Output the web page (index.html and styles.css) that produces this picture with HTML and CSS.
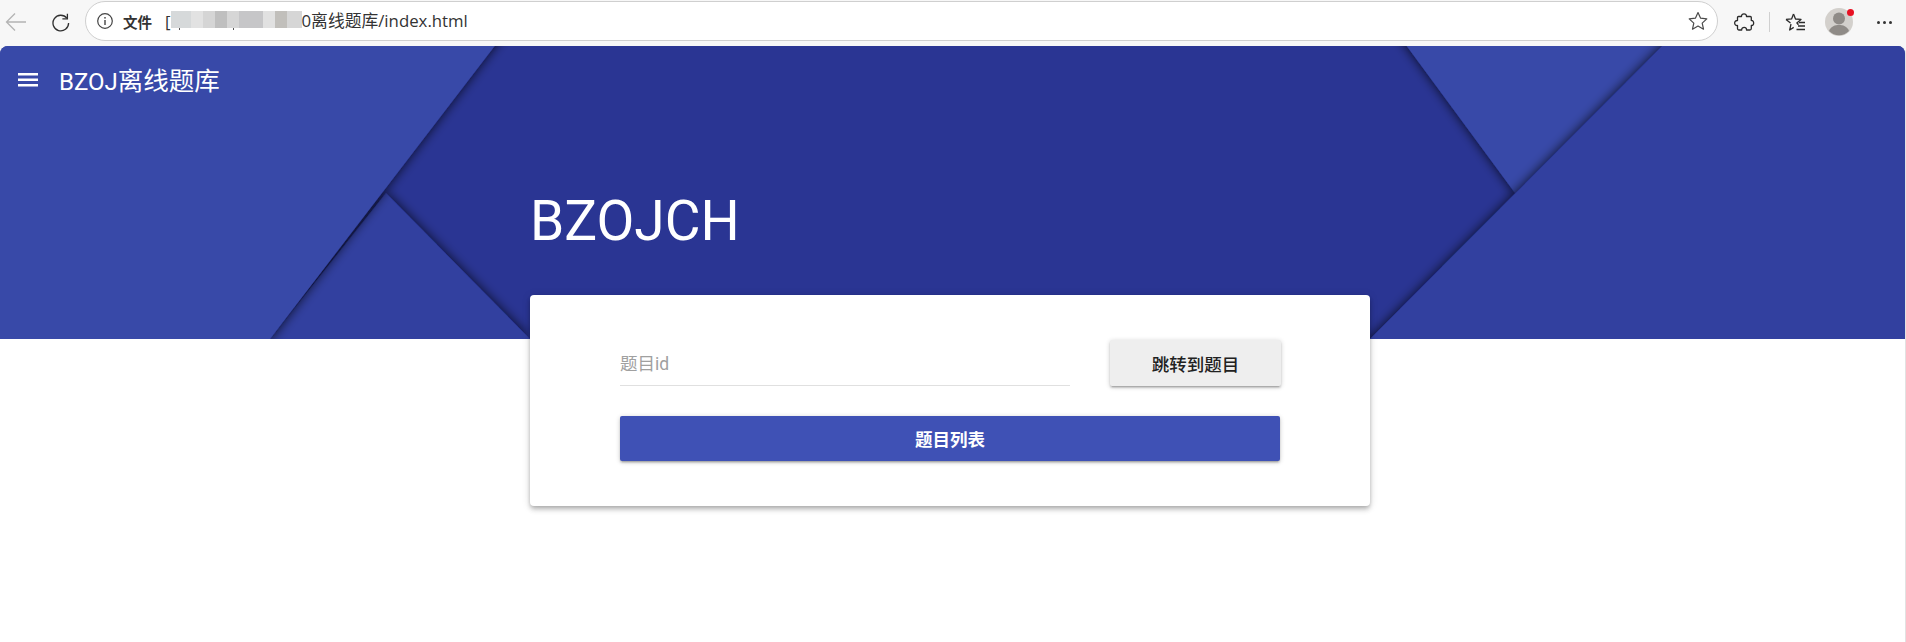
FILE: index.html
```html
<!DOCTYPE html>
<html lang="zh-CN">
<head>
<meta charset="utf-8">
<title>BZOJ离线题库</title>
<link rel="stylesheet" href="styles.css">
</head>
<body>
<div class="browser-bar">
  <button class="nav-btn back" aria-label="back">
    <svg width="24" height="24" viewBox="0 0 24 24"><path d="M22 12H2.500M11 3.500 2.500 12l8.500 8.500" fill="none" stroke="#b4b4b4" stroke-width="1.300"/></svg>
  </button>
  <button class="nav-btn reload" aria-label="reload">
    <svg width="20" height="20" viewBox="0 0 20 20"><path d="M15.900 6.200A7.800 7.800 0 1 0 17.600 11" fill="none" stroke="#303030" stroke-width="1.300"/><path d="M16.400 1.800v5h-5" fill="none" stroke="#303030" stroke-width="1.300"/></svg>
  </button>
  <div class="address">
    <svg class="info" width="18" height="18" viewBox="0 0 18 18"><circle cx="9" cy="9" r="7.300" fill="none" stroke="#444" stroke-width="1.200"/><rect x="8.300" y="8" width="1.400" height="5" fill="#444"/><rect x="8.300" y="5" width="1.400" height="1.600" fill="#444"/></svg>
    <span class="scheme">文件</span>
    <span class="url-start">[</span>
    <span class="mosaic"></span>
    <span class="url">0离线题库/index.html</span>
    <svg class="star" width="22" height="22" viewBox="0 0 22 22"><path d="M11 2.500l2.600 5.700 6.200.7-4.600 4.200 1.300 6.100L11 16.100l-5.500 3.100 1.300-6.100-4.600-4.200 6.200-.7z" fill="none" stroke="#4a4a4a" stroke-width="1.200" stroke-linejoin="round"/></svg>
  </div>
  <div class="tools">
    <svg class="ext" width="22" height="22" viewBox="0 0 22 22"><path d="M8.500 5.500c-.4-3.600 5.400-3.600 5 0h3.800a1 1 0 0 1 1 1v3c3-.6 3.300 5.400 0 5v3a1.500 1.500 0 0 1-1.500 1.500h-3.300c.4-3.400-5-3.400-4.800 0H6a1.500 1.500 0 0 1-1.500-1.500v-3c-3.800.5-3.800-5.400 0-5v-3a1 1 0 0 1 1-1z" fill="none" stroke="#2b2b2b" stroke-width="1.300" stroke-linejoin="round"/></svg>
    <span class="divider"></span>
    <svg class="favs" width="24" height="22" viewBox="0 0 24 22"><path d="M9.500 3l2 5 5.500.4-4.200 3.500 1.300 1.100-.3 1M7 13l-1.300 6 4-2.600M2 8.400l4.500 3.600" fill="none" stroke="#2b2b2b" stroke-width="1.300" stroke-linejoin="round"/><path d="M9.500 3 7.600 8 2 8.400M15 11.500h6M14 15h7M12.500 18.500h8.500" fill="none" stroke="#2b2b2b" stroke-width="1.300"/></svg>
    <div class="avatar">
      <svg width="28" height="28" viewBox="0 0 28 28"><circle cx="14" cy="14" r="14" fill="#d3d0cc"/><circle cx="14" cy="10.500" r="6" fill="#8f8b87"/><path d="M4 23c2-5 6-6 10-6s8 1 10 6a14 14 0 0 1-20 0z" fill="#8f8b87"/></svg>
      <span class="dot"></span>
    </div>
    <span class="more"><i></i><i></i><i></i></span>
  </div>
</div>

<div class="app">
  <header class="hero">
    <svg class="hero-art" viewBox="0 0 1905 293" preserveAspectRatio="none" aria-hidden="true">
      <defs>
        <filter id="s" filterUnits="userSpaceOnUse" x="-50" y="-50" width="2000" height="400">
          <feGaussianBlur in="SourceAlpha" stdDeviation="6"/>
          <feComponentTransfer><feFuncA type="linear" slope=".8"/></feComponentTransfer>
          <feMerge><feMergeNode/><feMergeNode in="SourceGraphic"/></feMerge>
        </filter>
      </defs>
      <polygon points="1392,-20 1682,-20 1515,147" fill="#3849a8" filter="url(#s)"/>
      <polygon points="386,147 270,293 530,293" fill="#303f9f" filter="url(#s)"/>
      <polygon points="-20,-20 510,-20 270,293 -20,293" fill="#3849a8" filter="url(#s)"/>
      <polygon points="1682,-20 1926,-20 1926,313 1350,313" fill="#303f9f" filter="url(#s)"/>
    </svg>
    <div class="toolbar">
      <svg class="menu" width="20" height="14" viewBox="0 0 20 14"><path d="M0 0h20v2.500H0zM0 5.500h20V8H0zM0 11h20v2.500H0z" fill="#fff"/></svg>
      <span class="app-title">BZOJ<span class="app-title-cjk">离线题库</span></span>
    </div>
    <h1 class="hero-title">BZOJCH</h1>
  </header>
  <main class="card">
    <div class="row">
      <label class="field"><input type="text" placeholder="题目id"></label>
      <button class="btn btn-light">跳转到题目</button>
    </div>
    <button class="btn btn-primary">题目列表</button>
  </main>
</div>
</body>
</html>
```

FILE: styles.css
```css
* { box-sizing: border-box; }
html, body { margin: 0; height: 100%; background: #f7f7f7; overflow: hidden; }
body { font-family: Roboto, "Noto Sans CJK SC", sans-serif; display: flex; flex-direction: column; }
button { font-family: inherit; border: 0; padding: 0; background: none; }

.browser-bar { height: 46px; flex: none; display: flex; align-items: center; background: #f7f7f7; padding-left: 4px; }
.nav-btn { width: 24px; height: 24px; margin-top: -3px; display: flex; align-items: center; justify-content: center; }
.reload { margin-left: 21px; }
.address { margin-left: 12px; width: 1633px; height: 40px; margin-top: -4px; border: 1px solid #cfcfcf; border-radius: 20px; background: #fff; display: flex; align-items: center; padding-left: 10px; font-family: "Open Sans", "Noto Sans CJK SC", sans-serif; color: #333; font-size: 16.800px; }
.info { flex: none; }
.scheme { margin-left: 9px; font-size: 14.500px; font-weight: 700; font-family: "Noto Sans CJK SC", sans-serif; color: #333; }
.url-start { margin-left: 13px; }
.mosaic { width: 131px; height: 20px; background:
  linear-gradient(#555, #555) 8px 17px / 1px 2px no-repeat,
  linear-gradient(#555, #555) 62px 17px / 1px 2px no-repeat,
  linear-gradient(90deg, #d6d9da 0 20px, #e2e2e2 20px 32px, #d5d5d5 32px 44px, #bfbfbf 44px 56px, #d6d6d6 56px 68px, #c6c6c8 68px 92px, #e1e1e1 92px 104px, #c1bfbb 104px 116px, #d6d6d6 116px 131px) 0 0 / 100% 17px no-repeat; }
.url { white-space: nowrap; margin-top: -2px; }
.star { margin-left: auto; margin-right: 8px; }
.tools { display: flex; align-items: center; margin-top: -2px; }
.ext { margin-left: 15px; }
.divider { width: 1px; height: 20px; background: #d0d0d0; margin-left: 14px; }
.favs { margin-left: 14px; }
.avatar { margin-left: 17px; width: 28px; height: 28px; position: relative; }
.avatar svg { display: block; }
.dot { position: absolute; right: -1px; top: 1px; width: 7px; height: 7px; border-radius: 50%; background: #e81123; }
.more { margin-left: 24px; display: flex; gap: 3px; }
.more i { width: 3px; height: 3px; border-radius: 50%; background: #333; }

.app { flex: 1; background: #fff; border-radius: 8px 8px 0 0; border-right: 1px solid #e2e2e2; overflow: hidden; display: flex; flex-direction: column; }
.hero { height: 293px; flex: none; background: #2a3593; position: relative; color: #fff; overflow: hidden; }
.hero-art { position: absolute; inset: 0; width: 100%; height: 100%; }
.toolbar { position: relative; display: flex; align-items: center; height: 64px; padding-left: 18px; }
.menu { flex: none; margin-top: 3px; }
.app-title { margin-left: 21px; margin-top: 1px; font-size: 24px; }
.app-title-cjk { font-size: 25.500px; }
.hero-title { position: relative; margin: 78px 0 0 530px; font-size: 55px; font-weight: 400; line-height: 66px; }

.card { width: 840px; height: 211px; margin: -44px 0 0 530px; position: relative; background: #fff; border-radius: 4px; padding: 45px 89px 0 90px; box-shadow: 0 2px 4px -1px rgba(0,0,0,.2), 0 4px 5px rgba(0,0,0,.14), 0 1px 10px rgba(0,0,0,.12); }
.row { display: flex; justify-content: space-between; height: 76px; }
.field { width: 450px; height: 46px; border-bottom: 1px solid #e0e0e0; display: block; }
.field input { width: 100%; height: 45px; padding: 2px 0 0; border: 0; outline: 0; font: 17.500px Roboto, "Noto Sans CJK SC", sans-serif; background: none; }
.field input::placeholder { color: #a0a0a0; opacity: 1; }
.btn { display: block; height: 46px; border-radius: 2px; font-size: 17.500px; font-weight: 700; box-shadow: 0 1px 5px rgba(0,0,0,.2), 0 2px 2px rgba(0,0,0,.14), 0 3px 1px -2px rgba(0,0,0,.12); }
.btn-light { width: 171px; background: #eeeeee; color: #212121; font-weight: 500; }
.btn-primary { width: 660px; height: 45px; background: #3f51b5; color: #fff; }
```
